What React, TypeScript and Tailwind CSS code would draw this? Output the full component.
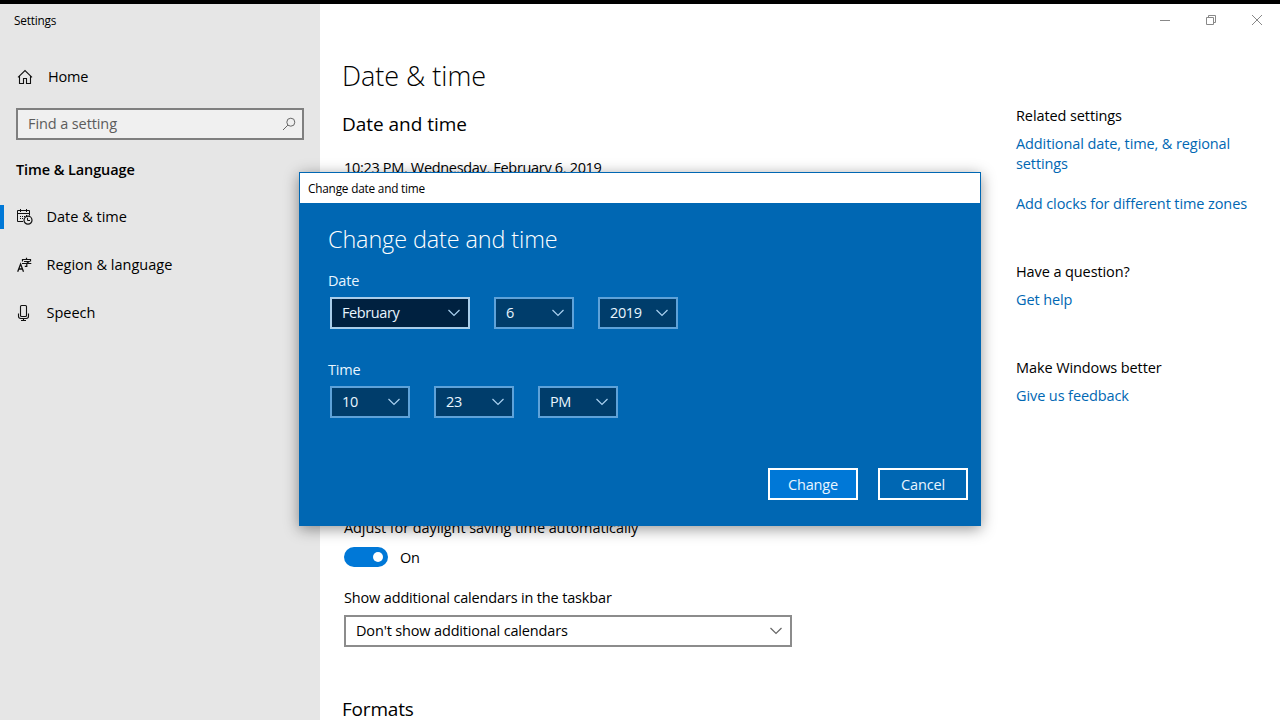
import * as React from 'react';
import clsx from 'clsx';

const HomeIcon = () => (
  <svg width="16" height="16" viewBox="0 0 16 16" fill="none" stroke="#111" strokeWidth="1.1">
    <path d="M1 8.3L8 1.5L15 8.3M2.5 7V14.5H6.5V9.5H9.5V14.5H13.5V7" />
  </svg>
);

const SearchIcon = () => (
  <svg width="14" height="14" viewBox="0 0 14 14" fill="none" stroke="#666">
    <circle cx="8.8" cy="5.2" r="4" />
    <path d="M5.9 8.1L1 13" />
  </svg>
);

const CalendarIcon = () => (
  <svg width="16" height="16" viewBox="0 0 16 16" fill="none" stroke="#111">
    <path d="M6 12.5H0.5V1.5H12.5V6.5M0.5 4.5H12.5M3.5 0V3M9.5 0V3" />
    <path d="M3 7.5H4M5 7.5H6M7 7.5H8M9 6.5H10M3 9.5H4M5 9.5H6" strokeWidth="1.2" />
    <circle cx="11" cy="11.2" r="4" strokeWidth="1.2" />
    <path d="M10.5 8.8V11.5H13" />
  </svg>
);

const LanguageIcon = () => (
  <svg width="16" height="16" viewBox="0 0 16 16" fill="none" stroke="#111" strokeWidth="1.3">
    <path d="M0.7 14.7L3.6 7L6.5 14.7M1.8 12H5.4" />
    <path d="M5.5 4.5V2.5H13.5V4.5M9.5 0.8V2.5M7 4.5H12L9.8 6.2V9.4H7.8M5 6.5H14.3" strokeWidth="1.2" />
  </svg>
);

const MicIcon = () => (
  <svg width="16" height="18" viewBox="0 0 16 18" fill="none" stroke="#111" strokeWidth="1.1">
    <rect x="3.5" y="1.5" width="6" height="11" rx="1" />
    <path d="M1.5 9.5V12.3Q1.5 14.5 3.8 14.5H9.2Q11.5 14.5 11.5 12.3V9.5M6.5 14.5V16.5M4 16.5H9" />
  </svg>
);

const Chevron = ({ className }: { className: string }) => (
  <svg className={className} width="12" height="8" viewBox="0 0 12 8" fill="none" stroke="currentColor" strokeWidth="1.2">
    <path d="M0.5 1L6 6.5L11.5 1" />
  </svg>
);

const navItems = [
  { label: 'Date & time', icon: <CalendarIcon />, active: true },
  { label: 'Region & language', icon: <LanguageIcon />, active: false },
  { label: 'Speech', icon: <MicIcon />, active: false },
];

const Picker = ({ value, wide, focused }: { value: string; wide?: boolean; focused?: boolean }) => (
  <button
    className={clsx(
      'flex h-8 items-center justify-between border-2 pl-[10px] pr-2',
      wide ? 'w-[140px]' : 'w-20',
      focused ? 'border-[#a9cdea] bg-[#002140]' : 'border-[#5ea2d9] bg-[#003d6b]'
    )}
  >
    <span className="tracking-[-0.4px]">{value}</span>
    <Chevron className="text-[#a9d0f0]" />
  </button>
);

const Sidebar = () => (
  <aside className="flex h-full w-80 shrink-0 flex-col bg-[#e6e6e6]">
    <div className="h-[34px] pl-[14px] text-[11.8px] leading-[33px] tracking-[-0.2px]">Settings</div>
    <div className="mt-[23px] flex h-8 items-center pl-[17px]">
      <HomeIcon />
      <span className="ml-[15px]">Home</span>
    </div>
    <div className="mx-4 mt-[15px] flex h-8 items-center justify-between border-2 border-[#7f7f7f] bg-[#f0f0f0] pl-[10px] pr-[6px] text-[#5c5c5c]">
      <span className="tracking-[-0.1px]">Find a setting</span>
      <SearchIcon />
    </div>
    <div className="mt-[14px] h-8 pl-4 font-semibold leading-8 tracking-[-0.1px]">Time &amp; Language</div>
    <nav className="mt-[7px] tracking-[0px]">
      {navItems.map((item) => (
        <div key={item.label} className="flex h-12 items-center">
          <div className={clsx('h-6 w-1', item.active && 'bg-[#0078d7]')} />
          <div className="ml-[13px] flex w-[29.5px]">{item.icon}</div>
          <span>{item.label}</span>
        </div>
      ))}
    </nav>
  </aside>
);

const Related = () => (
  <div className="w-[264px] shrink-0 pr-6 leading-5 tracking-[-0.1px] text-[#0067b3]">
    <div className="mt-[68px] text-black">Related settings</div>
    <div className="mt-2">Additional date, time, &amp; regional settings</div>
    <div className="mt-5 whitespace-nowrap">Add clocks for different time zones</div>
    <div className="mt-12 text-black">Have a question?</div>
    <div className="mt-2">Get help</div>
    <div className="mt-12 text-black">Make Windows better</div>
    <div className="mt-2">Give us feedback</div>
  </div>
);

const WindowButtons = () => (
  <div className="flex h-[34px] shrink-0 items-center justify-end gap-[34px] pb-[2px] pr-[17px] text-[#888]">
    <svg width="12" height="12" viewBox="0 0 12 12" fill="none" stroke="currentColor">
      <path d="M1 6.5H11" />
    </svg>
    <svg width="12" height="12" viewBox="0 0 12 12" fill="none" stroke="currentColor">
      <path d="M1.5 3.5H8.5V10.5H1.5ZM3.5 3.5V1.5H10.5V8.5H8.5" />
    </svg>
    <svg width="12" height="12" viewBox="0 0 12 12" fill="none" stroke="currentColor">
      <path d="M1 1L11 11M11 1L1 11" />
    </svg>
  </div>
);

const ChangeDialog = () => (
  <div className="absolute left-[299px] top-[168px] flex h-[354px] w-[682px] flex-col border border-[#0067b3] bg-[#0067b3] text-[#e8f5ff] shadow-[0_3px_14px_rgba(0,0,0,0.42)]">
    <div className="h-[30px] shrink-0 bg-white pl-2 text-[11.8px] leading-[30px] tracking-[-0.2px] text-black">Change date and time</div>
    <div className="flex flex-grow flex-col pl-7 pr-3">
      <h2 className="mt-5 h-8 text-[23.4px] font-light leading-8 tracking-[-0.1px] text-white">Change date and time</h2>
      <div className="mt-4 leading-5">Date</div>
      <div className="ml-[2px] mt-[6px] flex gap-6">
        <Picker value="February" wide focused />
        <Picker value="6" />
        <Picker value="2019" />
      </div>
      <div className="mt-[31px] leading-5">Time</div>
      <div className="ml-[2px] mt-[6px] flex gap-6">
        <Picker value="10" />
        <Picker value="23" />
        <Picker value="PM" />
      </div>
      <div className="mt-[50px] flex justify-end gap-5">
        <button className="h-8 w-[90px] border-2 border-white bg-[#0078d7] pt-px">Change</button>
        <button className="h-8 w-[90px] border-2 border-white pt-px">Cancel</button>
      </div>
    </div>
  </div>
);

const App = () => {
  return (
    <div className="relative flex h-[720px] w-[1280px] overflow-hidden border-t-4 border-black bg-white font-['Open_Sans','Noto_Sans',sans-serif] text-[14.5px] tracking-[-0.16px] text-black">
      <Sidebar />
      <main className="flex min-w-0 flex-grow flex-col">
        <WindowButtons />
        <div className="flex flex-grow justify-between">
          <div className="pl-6">
            <h1 className="-ml-[2px] mt-[18px] h-10 text-[27px] font-light leading-10 tracking-[-0.03px]">Date &amp; time</h1>
            <h2 className="-ml-[2px] mt-3 h-8 text-[19px] leading-8 tracking-[-0.03px]">Date and time</h2>
            <div className="mt-[18px] leading-5 tracking-[-0.32px]">10:23 PM, Wednesday, February 6, 2019</div>
            <div className="mt-[340px] leading-5 tracking-[-0.09px]">Adjust for daylight saving time automatically</div>
            <div className="mt-[9px] flex h-5 items-center">
              <div className="flex h-5 w-11 items-center justify-end rounded-full bg-[#0078d7] pr-[5px]">
                <div className="h-[10px] w-[10px] rounded-full bg-white" />
              </div>
              <span className="ml-3 pt-px">On</span>
            </div>
            <div className="mt-[21px] leading-5">Show additional calendars in the taskbar</div>
            <div className="mt-[7px] flex h-8 w-[448px] items-center justify-between border-2 border-[#8c8c8c] pl-[10px] pr-2">
              <span>Don't show additional calendars</span>
              <Chevron className="text-[#666]" />
            </div>
            <h2 className="-ml-[2px] mt-[52px] h-5 text-[19px] leading-5 tracking-[-0.2px]">Formats</h2>
          </div>
          <Related />
        </div>
      </main>
      <ChangeDialog />
    </div>
  );
};

export default App;
